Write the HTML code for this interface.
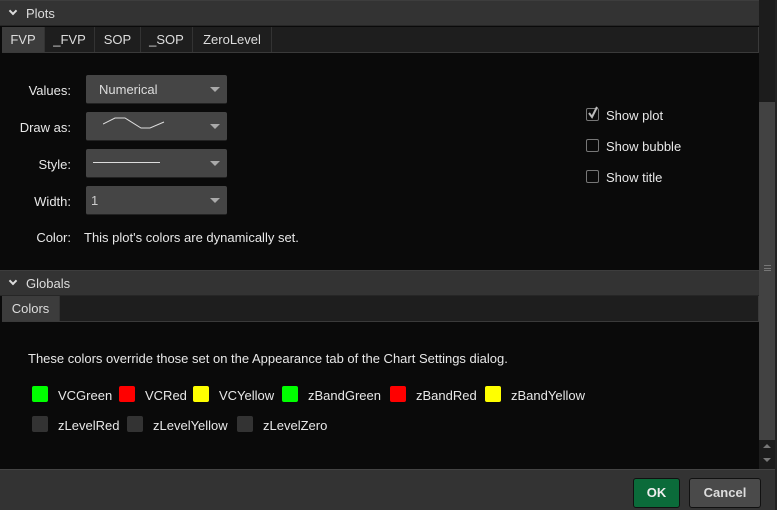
<!DOCTYPE html>
<html><head><style>
*{box-sizing:border-box;margin:0;padding:0}
body{width:777px;height:510px;background:#0a0a0a;font-family:"Liberation Sans",sans-serif;font-size:13px;color:#e8e8e8;position:relative;overflow:hidden}
.a{position:absolute}
.hdr{left:0;width:759px;height:26px;background:#333;border-top:1px solid #3d3d3d;border-bottom:1px solid #262626}
.hdr span{position:absolute;left:26px;top:5px;color:#ddd}
.chev{position:absolute;left:10px;top:7px;width:6px;height:6px;border-right:2px solid #ddd;border-bottom:2px solid #ddd;transform:rotate(45deg)}
.tabs{left:2px;width:757px;height:26px;background:#1e1e1e;border-bottom:1px solid #3a3a3a;border-right:1px solid #3a3a3a}
.tab{position:absolute;top:0;height:25px;line-height:26px;text-align:center;border-right:1px solid #333;color:#ddd}
.dd{left:86px;width:141px;height:29px;background:#454545;border-radius:2px;border-bottom:1px solid #222}
.dd:after{content:"";position:absolute;right:7px;top:12px;border-left:5px solid transparent;border-right:5px solid transparent;border-top:5px solid #aaa}
.lbl{text-align:right;width:71px;left:0}
.cb{width:13px;height:13px;border:1px solid #777;border-radius:2px;left:586px}
.sw{width:16px;height:16px;border-radius:2px}
.btn{height:30px;border-radius:3px;font-weight:bold;text-align:center;line-height:28px;font-size:13px}
</style></head><body>
<div class="a hdr" style="top:0"><div class="chev"></div><span>Plots</span></div>
<div class="a tabs" style="top:27px">
<div class="tab" style="left:0;width:43px;background:#3c3c3c">FVP</div>
<div class="tab" style="left:43px;width:50px">_FVP</div>
<div class="tab" style="left:93px;width:46px">SOP</div>
<div class="tab" style="left:139px;width:52px">_SOP</div>
<div class="tab" style="left:191px;width:79px">ZeroLevel</div>
</div>
<div class="a lbl" style="top:83px">Values:</div>
<div class="a dd" style="top:75px"><span class="a" style="left:13px;top:7px;color:#ddd">Numerical</span></div>
<div class="a lbl" style="top:120px">Draw as:</div>
<div class="a dd" style="top:112px"><svg class="a" style="left:17px;top:4px" width="70" height="20"><polyline points="0,8 12,2 22,2 38,12 47,12 61,6" fill="none" stroke="#ddd" stroke-width="1"/></svg></div>
<div class="a lbl" style="top:157px">Style:</div>
<div class="a dd" style="top:149px"><div class="a" style="left:7px;top:13px;width:67px;height:1px;background:#ddd"></div></div>
<div class="a lbl" style="top:194px">Width:</div>
<div class="a dd" style="top:186px"><span class="a" style="left:5px;top:7px;color:#ccc">1</span></div>
<div class="a lbl" style="top:230px">Color:</div>
<div class="a" style="left:84px;top:230px">This plot's colors are dynamically set.</div>
<div class="a cb" style="top:108px"></div><svg class="a" style="left:586px;top:104px" width="14" height="16"><polyline points="3,9 6,13 11,3" fill="none" stroke="#bbb" stroke-width="2"/></svg>
<div class="a" style="left:606px;top:108px">Show plot</div>
<div class="a cb" style="top:139px"></div><div class="a" style="left:606px;top:139px">Show bubble</div>
<div class="a cb" style="top:170px"></div><div class="a" style="left:606px;top:170px">Show title</div>
<div class="a hdr" style="top:270px"><div class="chev"></div><span>Globals</span></div>
<div class="a tabs" style="top:296px"><div class="tab" style="left:0;width:58px;background:#3c3c3c">Colors</div></div>
<div class="a" style="left:28px;top:351px">These colors override those set on the Appearance tab of the Chart Settings dialog.</div>
<div class="a sw" style="left:32px;top:386px;background:#0f0"></div><div class="a" style="left:58px;top:388px">VCGreen</div>
<div class="a sw" style="left:119px;top:386px;background:#f00"></div><div class="a" style="left:145px;top:388px">VCRed</div>
<div class="a sw" style="left:193px;top:386px;background:#ff0"></div><div class="a" style="left:219px;top:388px">VCYellow</div>
<div class="a sw" style="left:282px;top:386px;background:#0f0"></div><div class="a" style="left:308px;top:388px">zBandGreen</div>
<div class="a sw" style="left:390px;top:386px;background:#f00"></div><div class="a" style="left:416px;top:388px">zBandRed</div>
<div class="a sw" style="left:485px;top:386px;background:#ff0"></div><div class="a" style="left:511px;top:388px">zBandYellow</div>
<div class="a sw" style="left:32px;top:416px;background:#333"></div><div class="a" style="left:58px;top:418px">zLevelRed</div>
<div class="a sw" style="left:127px;top:416px;background:#333"></div><div class="a" style="left:153px;top:418px">zLevelYellow</div>
<div class="a sw" style="left:237px;top:416px;background:#333"></div><div class="a" style="left:263px;top:418px">zLevelZero</div>
<div class="a" style="left:759px;top:0;width:16px;height:102px;background:#1c1c1c"></div>
<div class="a" style="left:759px;top:102px;width:16px;height:338px;background:#424242"></div>
<div class="a" style="left:764px;top:265px;width:7px;height:6px;border-top:1px solid #777;border-bottom:1px solid #777"><div style="margin-top:2px;height:1px;background:#777"></div></div>
<div class="a" style="left:759px;top:440px;width:16px;height:29px;background:#1c1c1c"></div>
<div class="a" style="left:763px;top:444px;border-left:4px solid transparent;border-right:4px solid transparent;border-bottom:4px solid #777"></div>
<div class="a" style="left:763px;top:458px;border-left:4px solid transparent;border-right:4px solid transparent;border-top:4px solid #777"></div>
<div class="a" style="left:775px;top:0;width:2px;height:510px;background:#222"></div>
<div class="a" style="left:0;top:469px;width:775px;height:41px;background:#333;border-top:1px solid #444"></div>
<div class="a btn" style="left:633px;top:478px;width:47px;background:#0b6b3a;border:1px solid #111;color:#eee">OK</div>
<div class="a btn" style="left:689px;top:478px;width:72px;background:#4a4a4a;border:1px solid #111;color:#ddd">Cancel</div>
</body></html>
